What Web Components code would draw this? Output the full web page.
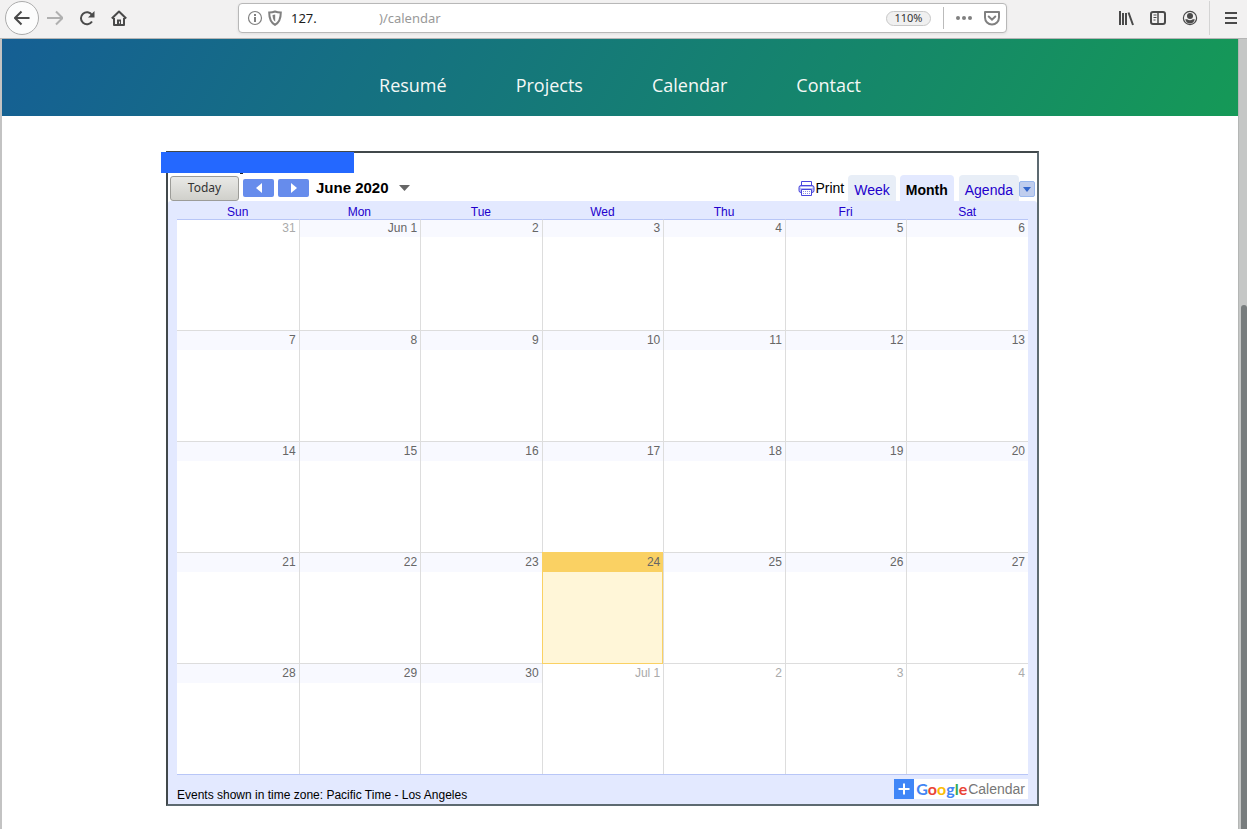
<!DOCTYPE html>
<html lang="en">
<head>
<meta charset="utf-8">
<title>Calendar</title>
<style>
  body {
    margin: 0;
    min-height: 100vh;
    display: flex;
    flex-direction: column;
    background: white;
    font-family: "Liberation Sans", Arial, sans-serif;
  }
  .view {
    flex: 1;
    display: flex;
    border-left: 2px solid #c3c3c3;
  }
  main {
    flex: 1;
    min-width: 0;
  }
  month-calendar {
    margin: 35px 199px 23px 164px;
  }
</style>
</head>
<body>
<browser-toolbar host="127." path=")/calendar" zoom="110%"></browser-toolbar>
<div class="view">
  <main>
    <site-nav>
      <a href="#resume">Resumé</a>
      <a href="#projects">Projects</a>
      <a href="#calendar">Calendar</a>
      <a href="#contact">Contact</a>
    </site-nav>
    <month-calendar year="2020" month="6" today="24">Events shown in time zone: Pacific Time - Los Angeles</month-calendar>
  </main>
  <scroll-rail></scroll-rail>
</div>

<script>
let toolbarTemplate = document.createElement('template');
toolbarTemplate.innerHTML = /*html*/`
  <style>
    :host {
      display: flex;
      align-items: center;
      box-sizing: border-box;
      height: 39px;
      padding: 0 0 2px 5px;
      background: #f2f1f1;
      border-bottom: 1px solid #b5b5b5;
      font-family: "Noto Sans", sans-serif;
    }
    button {
      display: grid;
      place-items: center;
      width: 32px;
      height: 32px;
      padding: 0;
      border: 0;
      background: none;
      color: #4a4a4a;
    }
    svg {
      display: block;
      width: 16px;
      height: 16px;
      fill: none;
      stroke: currentColor;
      stroke-width: 2;
    }
    .group {
      display: flex;
      align-items: center;
    }
    .back {
      width: 34px;
      height: 34px;
      border: 1px solid #acacac;
      border-radius: 50%;
      background: #fcfcfc;
    }
    .forward {
      color: #b0b0b0;
    }
    .url {
      flex: 1;
      display: flex;
      align-items: center;
      box-sizing: border-box;
      height: 30px;
      margin: 0 103px;
      padding: 0 0 0 8px;
      border: 1px solid #b8b8b8;
      border-radius: 4px;
      background: white;
      box-shadow: 0 1px 3px rgb(0 0 0 / 0.08);
      color: #808080;
    }
    .url svg {
      margin-right: 4px;
    }
    input {
      box-sizing: border-box;
      min-width: 0;
      padding: 0;
      border: 0;
      outline: 0;
      background: none;
      font: 13px/18px "Noto Sans", sans-serif;
      color: #999;
    }
    .host {
      width: 88px;
      margin-left: 4px;
      color: #1c1c1c;
    }
    .path {
      flex: 1;
    }
    .zoom {
      width: 45px;
      height: 15px;
      border: 1px solid #c8c8c8;
      border-radius: 8px;
      background: #f0f0f0;
      color: #333;
      font: 11px/12px "Noto Sans", sans-serif;
    }
    .url .more,
    .url .pocket {
      width: 28px;
      color: #808080;
    }
    .url .pocket svg,
    .url .more svg {
      margin: 0;
    }
    .line {
      width: 1px;
      height: 22px;
      margin: 0 6px 0 12px;
      background: #bbb;
    }
    .split {
      width: 1px;
      height: 34px;
      margin: 0 5px 0 3px;
      background: #d4d4d4;
    }
  </style>
  <div class="group">
    <button class="back" aria-label="Back"><svg viewBox="0 0 16 16"><path d="M15.500 8H1M7.500 1.500L1 8l6.500 6.500"/></svg></button>
    <button class="forward" aria-label="Forward"><svg viewBox="0 0 16 16"><path d="M0 8h15M9 1.500L15.500 8 9 14.500"/></svg></button>
    <button aria-label="Reload"><svg viewBox="0 0 16 16"><path d="M13 11.500A6 6 0 1 1 13 5"/><path d="M15.500 1v6.500H9z" fill="currentColor" stroke="none"/></svg></button>
    <button aria-label="Home"><svg viewBox="0 0 16 16"><path d="M.8 8.500L8 1.500l7.200 7M3 8v7h10V8" stroke-linejoin="round"/><path d="M6 15V9.500h4V15z" fill="currentColor" stroke="none"/><path d="M8.500 11.500v2" stroke="#f2f1f1" stroke-width="1"/></svg></button>
  </div>
  <div class="url">
    <svg viewBox="0 0 16 16"><circle cx="8" cy="8" r="6.500" stroke-width="1.200"/><path d="M8 7v5M8 4v2"/></svg>
    <svg viewBox="0 0 16 16"><path d="M8 1.500c2 .8 4 1 5.800 1 0 6-1.300 10-5.800 12.300C3.500 12.500 2.200 8.500 2.200 2.500 4 2.500 6 2.300 8 1.500z"/><path d="M8.200 4.500v7.300C6.300 10.300 5.600 8 5.500 5z" fill="currentColor" stroke="none"/></svg>
    <input class="host" aria-label="Host">
    <input class="path" aria-label="Path">
    <button class="zoom"></button>
    <span class="line"></span>
    <button class="more" aria-label="Page actions"><svg viewBox="0 0 16 16"><g fill="currentColor" stroke="none"><circle cx="2" cy="8" r="2"/><circle cx="8" cy="8" r="2"/><circle cx="14" cy="8" r="2"/></g></svg></button>
    <button class="pocket" aria-label="Save to Pocket"><svg viewBox="0 0 16 16"><path d="M1 2h14v5.500a7 7 0 0 1-14 0z" stroke-linejoin="round"/><path d="M4.700 6.500L8 9.700l3.300-3.200" stroke-linecap="round"/></svg></button>
  </div>
  <div class="group">
    <button aria-label="Library"><svg viewBox="0 0 16 16"><path d="M2 1v14M5 3v12M8 3v12M10.500 2.500L15 15"/></svg></button>
    <button aria-label="Sidebars"><svg viewBox="0 0 16 16"><rect x="1" y="2" width="14" height="12" rx="2"/><path d="M8 2v12" stroke-width="1.500"/><path d="M3.500 5h3M3.500 7.500h3M3.500 10h2" stroke-width="1"/></svg></button>
    <button aria-label="Account"><svg viewBox="0 0 16 16"><circle cx="8" cy="8" r="6.600" stroke-width="1.200"/><g fill="currentColor" stroke="none"><circle cx="8" cy="6" r="3"/><path d="M3.200 9.200h2c1.500 1.300 4.100 1.300 5.600 0h2c-.5 2.800-2.600 4.300-4.800 4.300s-4.300-1.500-4.800-4.300z"/></g></svg></button>
    <span class="split"></span>
    <button aria-label="Menu"><svg viewBox="0 0 16 16"><path d="M2 3h12M2 8h12M2 13h12"/></svg></button>
  </div>
`;

class BrowserToolbar extends HTMLElement {
  constructor() {
    super();
    this.shadow = this.attachShadow({mode: 'open'});
    this.shadow.appendChild(toolbarTemplate.content.cloneNode(true));
  }

  connectedCallback() {
    this.shadow.querySelector(".host").value = this.getAttribute("host");
    this.shadow.querySelector(".path").value = this.getAttribute("path");
    this.shadow.querySelector(".zoom").textContent = this.getAttribute("zoom");
  }
}

let navTemplate = document.createElement('template');
navTemplate.innerHTML = /*html*/`
  <style>
    :host {
      display: block;
      background: linear-gradient(120deg, #155f94, #159957);
    }
    nav {
      display: flex;
      justify-content: center;
      gap: 69px;
      padding: 34px 0 19px;
      font: 18px/24px "Open Sans", sans-serif;
    }
    ::slotted(a) {
      color: #f4f8f6;
      text-decoration: none;
    }
  </style>
  <nav><slot></slot></nav>
`;

class SiteNav extends HTMLElement {
  constructor() {
    super();
    this.attachShadow({mode: 'open'}).appendChild(navTemplate.content.cloneNode(true));
  }
}

let calendarTemplate = document.createElement('template');
calendarTemplate.innerHTML = /*html*/`
  <style>
    :host {
      display: block;
      position: relative;
      border: 2px solid;
      border-color: #41484b #5d6a71 #5d6a71 #41484b;
      font-size: 12px;
      color: black;
    }
    a {
      color: #20c;
      text-decoration: none;
    }
    button {
      padding: 0;
      border: 0;
      background: none;
      color: inherit;
    }
    svg {
      display: block;
    }
    /* covers the calendar's title */
    .cover {
      position: absolute;
      left: -7px;
      top: -1px;
      width: 193px;
      height: 21px;
      background: #2468ff;
    }
    .cover::after {
      content: "";
      position: absolute;
      left: 79px;
      top: 21px;
      width: 3px;
      height: 1px;
      background: #222;
    }
    .controls {
      display: flex;
      align-items: flex-end;
      padding: 22px 2px 0;
      height: 26px;
    }
    .left {
      flex: 1;
      display: flex;
      align-items: center;
      gap: 4px;
      height: 26px;
    }
    .today-button {
      box-sizing: border-box;
      width: 69px;
      height: 25px;
      border: 1px solid #9c9c98;
      border-radius: 3px;
      background: linear-gradient(#e9e9e6, #d0d0cb);
      color: #333;
      font: 12px/20px "Noto Sans", sans-serif;
    }
    .step {
      display: grid;
      place-items: center;
      width: 31px;
      height: 18px;
      border-radius: 2px;
      background: #668cec;
    }
    .date {
      display: flex;
      align-items: center;
      gap: 10px;
      margin-left: 3px;
      font: bold 15px/20px "Liberation Sans", Arial, sans-serif;
    }
    .print {
      display: flex;
      align-items: center;
      align-self: center;
      margin-right: 4px;
      color: black;
      font-size: 14px;
    }
    .tab {
      height: 26px;
      margin-right: 4px;
      padding: 0 6px;
      border-radius: 4px 4px 0 0;
      background: #e8eef7;
      font-size: 14px;
      line-height: 30px;
    }
    .tab.selected {
      margin-right: 5px;
      background: #e3e9ff;
      color: black;
      font-weight: bold;
    }
    .tab.last {
      margin-right: 0;
    }
    .menu {
      box-sizing: border-box;
      display: grid;
      place-items: center;
      width: 16px;
      height: 16px;
      margin-bottom: 4px;
      border: 1px solid #9ab8ee;
      border-radius: 2px;
      background: #bfcdee;
    }
    .body {
      padding: 0 9px;
      border-radius: 3px 3px 0 0;
      background: #e3e9ff;
    }
    table {
      width: 100%;
      table-layout: fixed;
      border-spacing: 0;
      border-bottom: 1px solid #b8c6f7;
    }
    th {
      padding: 4px 0 0;
      font-weight: normal;
      line-height: 14px;
      color: #20c;
    }
    td {
      box-sizing: border-box;
      height: 111px;
      padding: 0;
      border-top: 1px solid #ddd;
      vertical-align: top;
      text-align: right;
      background: white;
    }
    td + td {
      border-left: 1px solid #ddd;
    }
    tr:first-child td {
      border-top-color: #b8c6f7;
    }
    td div {
      padding-right: 3px;
      background: #f8f9ff;
      line-height: 19px;
      color: #666;
    }
    tr:first-child td div {
      line-height: 17px;
    }
    .other div {
      background: white;
      color: #aaa;
    }
    td.today {
      position: relative;
      border-color: #fad163;
      background: #fff6d8;
      box-shadow: inset -1px 0 #fad163, 0 1px #fad163;
    }
    .today div {
      background: #fad163;
    }
    .footer {
      display: flex;
      align-items: flex-start;
      justify-content: space-between;
      padding-top: 4px;
      height: 25px;
    }
    .zone {
      padding-top: 7px;
      line-height: 18px;
    }
    .badge {
      display: flex;
      align-items: center;
      height: 20px;
      padding-right: 3px;
      background: white;
      color: #777;
      font-size: 14px;
    }
    .google {
      margin: 0 1px 0 2px;
      font: bold 16px/20px Lato, sans-serif;
    }
    .b { color: #4285f4; }
    .r { color: #ea4335; }
    .y { color: #fbbc05; }
    .g { color: #34a853; }
  </style>
  <div class="controls">
    <div class="left">
      <button class="today-button">Today</button>
      <button class="step" aria-label="Previous"><svg width="6" height="10"><path d="M6 0v10L0 5z" fill="white"/></svg></button>
      <button class="step" aria-label="Next"><svg width="6" height="10"><path d="M0 0v10l6-5z" fill="white"/></svg></button>
      <button class="date"><span class="title"></span><svg width="11" height="6"><path d="M0 0h11L5.500 6z" fill="#666"/></svg></button>
    </div>
    <a class="print" href="#print">
      <svg width="17" height="17" viewBox="0 0 17 17" fill="none" stroke="#4a46dd">
        <path d="M3.500 5.500v-4h10v4" fill="white"/>
        <rect x="1" y="5.500" width="15" height="7" rx="2" fill="#b9bcf5"/>
        <path d="M2.500 7.500h12" stroke="white"/>
        <path d="M3.500 9.500h10v6h-10z" fill="white"/>
        <path d="M5 11.500h7M5 13.500h7" stroke-dasharray="1 1" stroke="#8c8ce8"/>
      </svg>Print</a>
    <a class="tab" href="#week">Week</a>
    <a class="tab selected" href="#month">Month</a>
    <a class="tab last" href="#agenda">Agenda</a>
    <button class="menu" aria-label="More views"><svg width="8" height="5"><path d="M0 0h8L4 5z" fill="#3366cc"/></svg></button>
  </div>
  <div class="body">
    <table>
      <thead><tr></tr></thead>
      <tbody></tbody>
    </table>
    <div class="footer">
      <span class="zone"><slot></slot></span>
      <a class="badge" href="#google"><svg width="20" height="20"><path d="M0 0h20v20H0z" fill="#4086f7"/><path d="M10 4.500v11M4.500 10h11" stroke="white" stroke-width="2"/></svg><span class="google"><span class="b">G</span><span class="r">o</span><span class="y">o</span><span class="b">g</span><span class="g">l</span><span class="r">e</span></span>Calendar</a>
    </div>
  </div>
  <div class="cover"></div>
`;

const MONTHS = ["January", "February", "March", "April", "May", "June", "July",
  "August", "September", "October", "November", "December"];
const DAYS = ["Sun", "Mon", "Tue", "Wed", "Thu", "Fri", "Sat"];

class MonthCalendar extends HTMLElement {
  constructor() {
    super();
    this.shadow = this.attachShadow({mode: 'open'});
    this.shadow.appendChild(calendarTemplate.content.cloneNode(true));
  }

  connectedCallback() {
    let year = +this.getAttribute("year");
    let month = +this.getAttribute("month") - 1;
    let today = +this.getAttribute("today");
    this.shadow.querySelector(".title").textContent = `${MONTHS[month]} ${year}`;
    this.shadow.querySelector("thead tr").innerHTML = DAYS.map(day => `<th scope="col">${day}</th>`).join("");

    let offset = new Date(year, month, 1).getDay();
    let length = new Date(year, month + 1, 0).getDate();
    let weeks = Math.ceil((offset + length) / 7);
    let bodyElt = this.shadow.querySelector("tbody");
    for (let week = 0; week < weeks; week++) {
      let rowElt = bodyElt.insertRow();
      for (let day = 0; day < 7; day++) {
        let date = new Date(year, month, week * 7 + day + 1 - offset);
        let cellElt = rowElt.insertCell();
        let label = date.getDate();
        // the first of a month also names it
        if (label === 1) label = `${MONTHS[date.getMonth()].slice(0, 3)} 1`;
        cellElt.innerHTML = `<div>${label}</div>`;
        if (date.getMonth() !== month) {
          cellElt.className = "other";
        } else if (date.getDate() === today) {
          cellElt.className = "today";
        }
      }
    }
  }
}

let railTemplate = document.createElement('template');
railTemplate.innerHTML = /*html*/`
  <style>
    :host {
      display: flex;
      box-sizing: border-box;
      width: 9px;
      padding: 266px 0 0 2px;
      border-left: 1px solid #b4b6b5;
      background: #c5c7c6;
    }
    div {
      flex: 1;
      border-radius: 3px 3px 0 0;
      background: #787d7e;
    }
  </style>
  <div></div>
`;

class ScrollRail extends HTMLElement {
  constructor() {
    super();
    this.attachShadow({mode: 'open'}).appendChild(railTemplate.content.cloneNode(true));
  }
}

customElements.define('browser-toolbar', BrowserToolbar);
customElements.define('site-nav', SiteNav);
customElements.define('month-calendar', MonthCalendar);
customElements.define('scroll-rail', ScrollRail);
</script>
</body>
</html>
